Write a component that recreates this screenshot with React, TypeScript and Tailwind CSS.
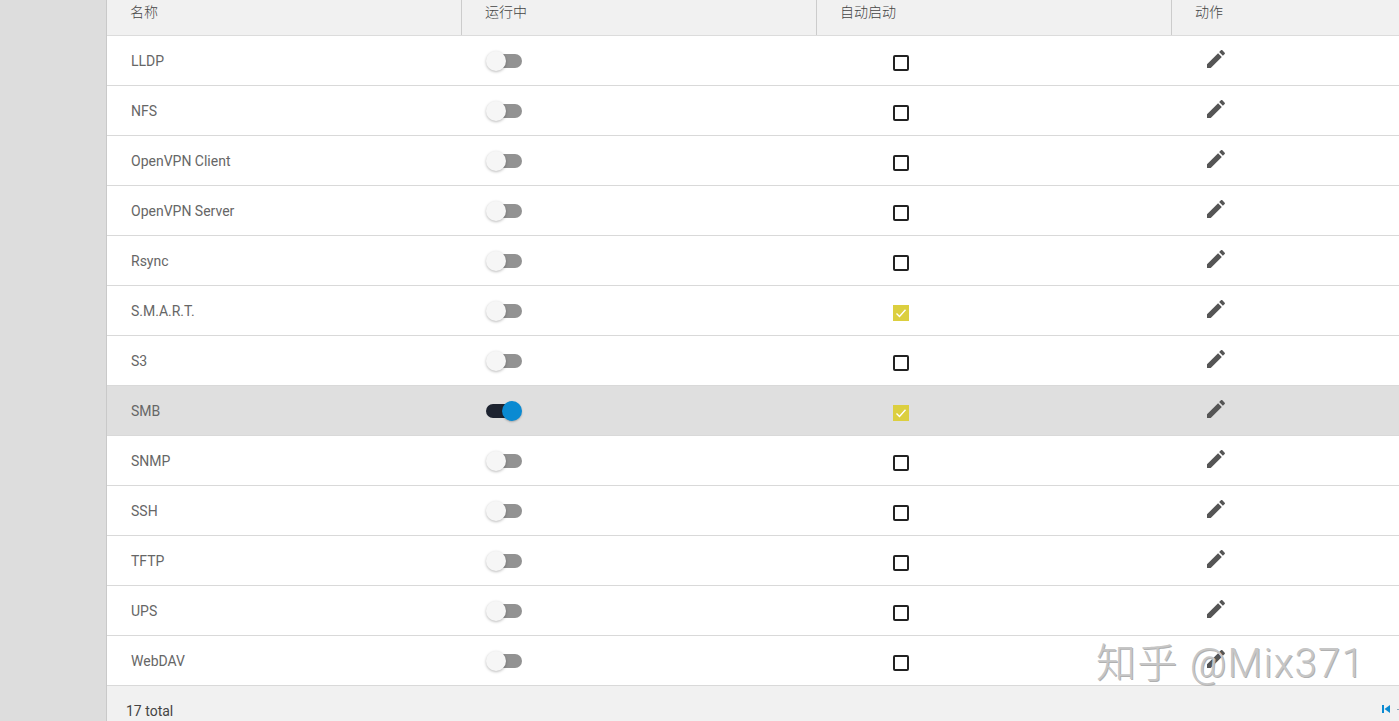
import React from 'react';

const font = { fontFamily: '"Roboto", "Noto Sans CJK SC", sans-serif' };

const services = [
  { name: 'LLDP' },
  { name: 'NFS' },
  { name: 'OpenVPN Client' },
  { name: 'OpenVPN Server' },
  { name: 'Rsync' },
  { name: 'S.M.A.R.T.', auto: true },
  { name: 'S3' },
  { name: 'SMB', auto: true, running: true },
  { name: 'SNMP' },
  { name: 'SSH' },
  { name: 'TFTP' },
  { name: 'UPS' },
  { name: 'WebDAV' },
];

const columns = 'grid grid-cols-[355px_355px_355px_1fr]';

function Toggle({ on }: { on?: boolean }) {
  if (on) {
    return (
      <div className="flex items-center w-[36px] h-[20px] mt-[1px]">
        <div className="w-[24px] h-[14px] rounded-l-full bg-[#1d2330] shrink-0" />
        <div className="w-[20px] h-[20px] rounded-full bg-[#0a8ad2] -ml-[8px] shrink-0 shadow-[0_1px_2px_rgba(0,0,0,0.25)]" />
      </div>
    );
  }
  return (
    <div className="flex items-center w-[36px] h-[20px]">
      <div className="w-[20px] h-[20px] rounded-full bg-[#f6f6f6] shadow-[0_1px_3px_rgba(0,0,0,0.28)] z-10 shrink-0" />
      <div className="w-[25px] h-[14px] rounded-r-full bg-[#929292] -ml-[9px] shrink-0" />
    </div>
  );
}

function Check({ on }: { on?: boolean }) {
  if (on) {
    return (
      <div className="w-[16px] h-[16px] bg-[#dccf3f] flex items-center justify-center">
        <svg width="14" height="14" viewBox="0 0 14 14" fill="none" stroke="#ffffff" strokeWidth="1.4">
          <path d="M2.5 7.5L5.5 10.5L11.5 3.8" />
        </svg>
      </div>
    );
  }
  return <div className="w-[16px] h-[16px] border-2 border-[#222222] rounded-[2px]" />;
}

function Pencil() {
  return (
    <svg width="24" height="24" viewBox="0 0 24 24" fill="#555555">
      <path d="M3 17.25V21h3.75L17.81 9.94l-3.75-3.75L3 17.25zM20.71 7.04c.39-.39.39-1.02 0-1.41l-2.34-2.34c-.39-.39-1.02-.39-1.41 0l-1.83 1.83 3.75 3.75 1.83-1.83z" />
    </svg>
  );
}

export default function App() {
  return (
    <div className="relative flex h-[721px] overflow-hidden bg-[#dddddd] text-[14px] text-[#666666]" style={font}>
      <div className="w-[106px] shrink-0" />
      <div className="flex-1 border-l border-[#c9c9c9] bg-white">
        <div className={`${columns} h-[36px] bg-[#f1f1f1] border-b border-[#dcdcdc] text-[14px] font-light text-[#444444]`}>
          <div className="pl-[23px] pt-[2px] border-r border-[#cccccc]">名称</div>
          <div className="pl-[23px] pt-[2px] border-r border-[#cccccc]">运行中</div>
          <div className="pl-[23px] pt-[2px] border-r border-[#cccccc]">自动启动</div>
          <div className="pl-[23px] pt-[2px]">动作</div>
        </div>
        {services.map(s => (
          <div
            key={s.name}
            className={`${columns} h-[50px] border-b border-[#d9d9d9] ${s.running ? 'bg-[#dfdfdf]' : 'bg-white'}`}
          >
            <div className="pl-[24px] flex items-center pt-[1px]">{s.name}</div>
            <div className="pl-[24px] flex items-center">
              <Toggle on={s.running} />
            </div>
            <div className="pl-[76px] flex items-center pt-[4px]">
              <Check on={s.auto} />
            </div>
            <div className="pl-[32px] flex items-center pb-[3px]">
              <Pencil />
            </div>
          </div>
        ))}
        <div className="flex justify-between bg-[#f1f1f1] h-[40px] pl-[19px] pt-[15px] text-[#444444]">
          <span>17 total</span>
          <div className="flex items-start pt-[2px]">
            <svg width="12" height="12" viewBox="0 0 12 12" fill="#0a8ad2">
              <path d="M2 2h2v8H2zM10 2v8L4.5 6z" />
            </svg>
            <div className="w-[2px] h-[1px] bg-[#8aa8b8] ml-[5px] mt-[6px]" />
          </div>
        </div>
      </div>
      <div className="absolute left-[1096px] top-[640px] text-[40px] leading-[48px] text-[#c6c6c6] tracking-[1.3px] font-light whitespace-nowrap [text-shadow:1px_1px_0_#b0b0b0]">
        知乎 @Mix371
      </div>
    </div>
  );
}
